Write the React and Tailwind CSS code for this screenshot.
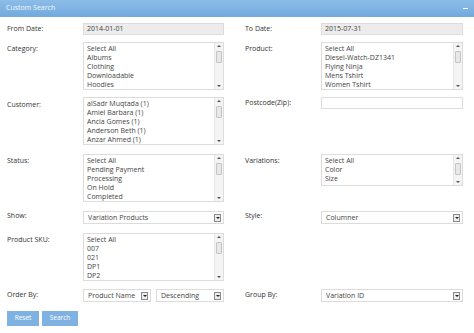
import React from 'react';

const font = { fontFamily: '"Open Sans", "Noto Sans", sans-serif' };

const ScrollBar = () => (
  <div className="absolute right-0 top-0 bottom-0 w-[9px] bg-[#f4f4f4] border-l border-[#e6e6e6] flex flex-col items-center justify-between py-[2px]">
    <span className="w-0 h-0 border-x-[2px] border-x-transparent border-b-[2px] border-b-[#555]" />
    <span className="absolute top-[8px] w-[6px] h-[12px] bg-[#e8e8e8] border border-[#c4c4c4] rounded-[1px]" />
    <span className="w-0 h-0 border-x-[2px] border-x-transparent border-t-[2px] border-t-[#555]" />
  </div>
);

const ListBox = ({ items, h = 'h-[48px]' }) => (
  <div className={`relative ${h} border border-[#dcdcdc] bg-white overflow-hidden`}>
    <div className="pl-[3px] pt-[1px] text-[7px] leading-[9px] text-[#444]">
      {items.map((it) => (
        <div key={it} className="whitespace-nowrap">{it}</div>
      ))}
    </div>
    <ScrollBar />
  </div>
);

const TextBox = ({ value, gray }) => (
  <div className={`h-[12px] border border-[#dcdcdc] ${gray ? 'bg-[#ececec]' : 'bg-white'} pl-[3px] text-[7px] leading-[10px] text-[#444]`}>
    {value}
  </div>
);

const Select = ({ value }) => (
  <div className="relative h-[13px] border border-[#dcdcdc] bg-white pl-[4px] text-[7px] leading-[11px] text-[#444]">
    {value}
    <div className="absolute right-[2px] top-[2px] w-[7px] h-[8px] border border-[#8a8a8a] bg-[#ededed] flex items-center justify-center">
      <span className="w-0 h-0 border-x-[2px] border-x-transparent border-t-[2px] border-t-[#222]" />
    </div>
  </div>
);

const Label = ({ children }) => (
  <div className="text-[7px] leading-[10px] text-[#333]">{children}</div>
);

const Row = ({ className = '', left, leftField, right, rightField, leftTop = 'pt-[2px]', rightTop = 'pt-[2px]' }) => (
  <div className={`flex ${className}`}>
    <div className={`w-[76px] ${leftTop}`}><Label>{left}</Label></div>
    <div className="w-[141px]">{leftField}</div>
    <div className="w-[21px]" />
    {right ? (
      <>
        <div className={`w-[76px] ${rightTop}`}><Label>{right}</Label></div>
        <div className="w-[142px]">{rightField}</div>
      </>
    ) : null}
  </div>
);

export default function App() {
  return (
    <div style={font} className="w-[474px] h-[333px] bg-white overflow-hidden">
      <div className="h-[17px] bg-gradient-to-b from-[#8cbde8] to-[#72a9dd] flex items-center justify-between px-[6px]">
        <span className="text-[7px] text-white/90">Custom Search</span>
        <span className="w-[5px] h-[1px] bg-white" />
      </div>

      <div className="pl-[7px]">
        <Row
          className="mt-[6px]"
          left="From Date:"
          leftField={<TextBox value="2014-01-01" gray />}
          right="To Date:"
          rightField={<TextBox value="2015-07-31" gray />}
          leftTop="pt-[1px]"
          rightTop="pt-[1px]"
        />
        <Row
          className="mt-[7px]"
          left="Category:"
          leftField={<ListBox items={['Select All', 'Albums', 'Clothing', 'Downloadable', 'Hoodies']} />}
          right="Product:"
          rightField={<ListBox items={['Select All', 'Diesel-Watch-DZ1341', 'Flying Ninja', 'Mens Tshirt', 'Women Tshirt']} />}
        />
        <Row
          className="mt-[7px]"
          left="Customer:"
          leftField={<ListBox items={['alSadr Muqtada (1)', 'Amiel Barbara (1)', 'Ancia Gomes (1)', 'Anderson Beth (1)', 'Anzar Ahmed (1)', 'Angela Jatill (1)']} />}
          right="Postcode(Zip):"
          rightField={<TextBox value="" />}
          leftTop="pt-[3px]"
          rightTop="pt-[1px]"
        />
        <Row
          className="mt-[9px]"
          left="Status:"
          leftField={<ListBox items={['Select All', 'Pending Payment', 'Processing', 'On Hold', 'Completed']} />}
          right="Variations:"
          rightField={<ListBox h="h-[32px]" items={['Select All', 'Color', 'Size']} />}
        />
        <Row
          className="mt-[9px]"
          left="Show:"
          leftField={<Select value="Variation Products" />}
          right="Style:"
          rightField={<Select value="Columner" />}
          leftTop="pt-0"
          rightTop="pt-0"
        />
        <Row
          className="mt-[9px]"
          left="Product SKU:"
          leftField={<ListBox items={['Select All', '007', '021', 'DP1', 'DP2']} />}
        />
        <Row
          className="mt-[8px]"
          left="Order By:"
          leftField={
            <div className="flex gap-[5px]">
              <div className="w-[68px]"><Select value="Product Name" /></div>
              <div className="flex-1"><Select value="Descending" /></div>
            </div>
          }
          right="Group By:"
          rightField={<Select value="Variation ID" />}
          leftTop="pt-[1px]"
          rightTop="pt-[1px]"
        />
        <div className="flex gap-[3px] mt-[9px]">
          <button className="w-[32px] h-[15px] bg-[#7fb2e2] text-white text-[6.5px] leading-none">Reset</button>
          <button className="w-[36px] h-[15px] bg-[#7fb2e2] text-white text-[6.5px] leading-none">Search</button>
        </div>
      </div>
    </div>
  );
}
